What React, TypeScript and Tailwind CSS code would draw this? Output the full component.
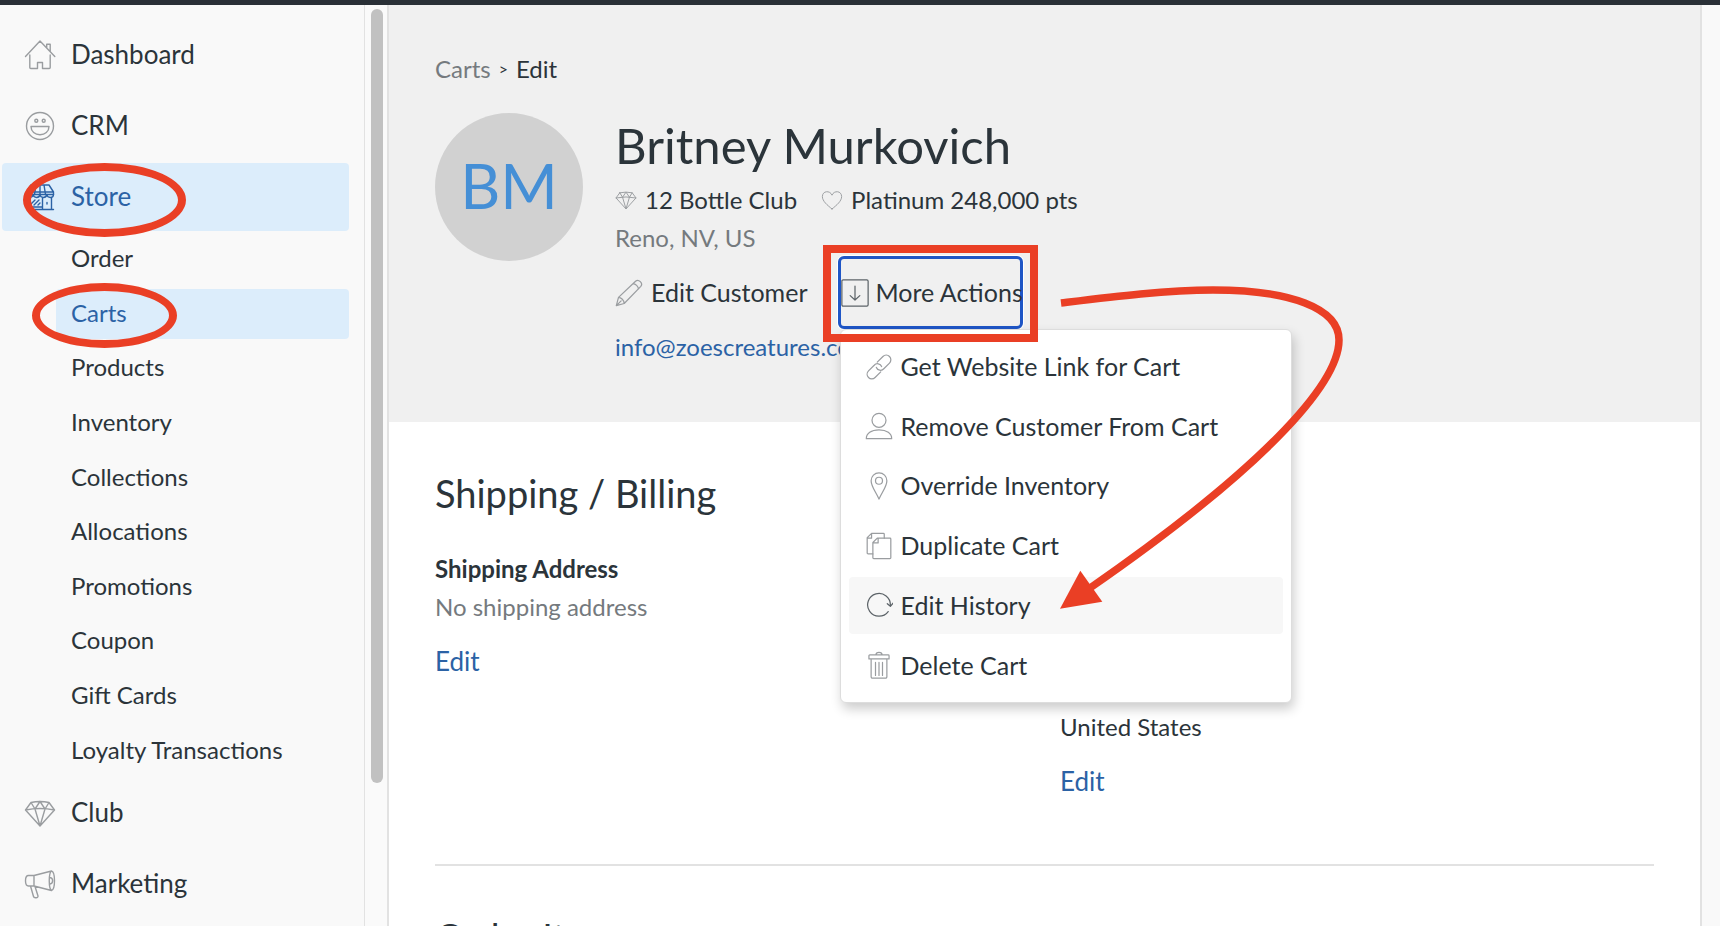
import type { ReactNode } from 'react';

type IconProps = { className?: string };

const Svg = ({ className, children }: IconProps & { children: ReactNode }) => (
    <svg
        viewBox="0 0 32 32"
        fill="none"
        stroke="currentColor"
        strokeWidth="1.4"
        strokeLinecap="round"
        strokeLinejoin="round"
        className={className}
        aria-hidden="true"
    >
        {children}
    </svg>
);

const HomeIcon = ({ className }: IconProps) => (
    <Svg className={className}>
        <path d="M1.5 17.5 16 2l14.800 15.500M5.800 16v12.500a1 1 0 0 0 1 1h6.700v-6h5v6h6.700a1 1 0 0 0 1-1V16M22.700 8.700V5.200h3.500v7.200" />
    </Svg>
);

const SmileIcon = ({ className }: IconProps) => (
    <Svg className={className}>
        <circle cx="16" cy="16" r="13.5" />
        <circle cx="12.300" cy="10.800" r="1.500" />
        <circle cx="19.700" cy="10.800" r="1.500" />
        <path d="M7 16.500h18c0 5-4 8.300-9 8.300s-9-3.300-9-8.300Z" />
    </Svg>
);

const StoreIcon = ({ className }: IconProps) => (
    <Svg className={className}>
        <path d="M7 4h18l4.500 7v2.500H2.500V11L7 4ZM2.500 11h27M12 4l-1.500 9.500M20 4l1.500 9.500M16 4v9.500" />
        <path d="M2.500 13.500c0 4 6 4 6.700 0 .7 4 6 4 6.800 0 .7 4 6 4 6.800 0 .7 4 6.700 4 6.700 0M4.500 17v11.500M27.500 17v11.500M3 28.500h26.500M4.500 26h14M18.500 28.500V17.500M7 23l4-4M10 24l5-5M14 24l2-2M23 21.500v1.500" />
    </Svg>
);

const DiamondIcon = ({ className }: IconProps) => (
    <Svg className={className}>
        <path d="M7 5.500q9-2 18 0L30.500 13 16 29 1.500 13 7 5.500ZM1.500 13q14.500-3 29 0M7 5.500l4 6.500L16 4.500l5 7.500 4-6.500M11 12l5 17 5-17" />
    </Svg>
);

const MegaphoneIcon = ({ className }: IconProps) => (
    <Svg className={className}>
        <path d="M10 7.500H4.500c-4 0-4 10.500 0 10.500H10M10 7.500V18l17.500 4.500c4-1 4-18.500 0-19.500L10 7.500ZM27.500 3c-3 2-3 17.500 0 19.500M26 9.500c3.500.5 3.500 6 0 6.500M6.500 18l3 10.500c.5 2 5 1.500 4.500-.5l-3-9.500" />
    </Svg>
);

const HeartIcon = ({ className }: IconProps) => (
    <Svg className={className}>
        <path d="M16 29C9 23.500 2 17.500 2 11c0-8.500 11-9.500 14-2 3-7.500 14-6.500 14 2 0 6.500-7 12.500-14 18Z" />
    </Svg>
);

const PencilIcon = ({ className }: IconProps) => (
    <Svg className={className}>
        <path d="M1.500 30.500 4 21 23.500 2.500c3.500-3 9 2.500 6 6L10.500 28l-9 2.500ZM4 21c3 0 6.500 3.500 6.500 7M20.500 5.300c3 0 6.200 3.200 6.200 6.200M1.500 30.500 7 25" />
    </Svg>
);

const DownloadBoxIcon = ({ className }: IconProps) => (
    <Svg className={className}>
        <rect x="1" y="1" width="30" height="30" rx="1.500" />
        <path d="M16 8v16M10.500 19l5.500 5 5.500-5" />
    </Svg>
);

const LinkIcon = ({ className }: IconProps) => (
    <Svg className={className}>
        <path d="M13 16.500a5 5 0 0 0 8.500 1.500l6.500-6.500a5.300 5.300 0 0 0-7.500-7.500l-6.500 6.500" />
        <path d="M19 15.500a5 5 0 0 0-8.500-1.500L4 20.500a5.300 5.300 0 0 0 7.500 7.500l6.500-6.500" />
    </Svg>
);

const UserIcon = ({ className }: IconProps) => (
    <Svg className={className}>
        <circle cx="16" cy="9.500" r="8" />
        <path d="M1.500 30.500c0-6 5.500-10 14.500-10s14.500 4 14.500 10h-29Z" />
    </Svg>
);

const PinIcon = ({ className }: IconProps) => (
    <Svg className={className}>
        <path d="M16 31C13 23.500 7 17 7 10a9 9 0 0 1 18 0c0 7-6 13.500-9 21Z" />
        <circle cx="16" cy="10" r="4" />
    </Svg>
);

const CopyIcon = ({ className }: IconProps) => (
    <Svg className={className}>
        <path d="M9 25H3.500a1 1 0 0 1-1-1V6.500L7.500 1.500H21a1 1 0 0 1 1 1V7M2.500 7h5V1.500" />
        <path d="M14 7h14.500a1 1 0 0 1 1 1v21.500a1 1 0 0 1-1 1H10a1 1 0 0 1-1-1V12l5-5ZM9 12.500h6V7" />
    </Svg>
);

const RefreshIcon = ({ className }: IconProps) => (
    <Svg className={className}>
        <path d="M26.500 23.500A13 13 0 1 1 29 16.500M25.500 14.500l3.500 3 3-3.500" />
    </Svg>
);

const TrashIcon = ({ className }: IconProps) => (
    <Svg className={className}>
        <path d="M7 10v19.500a1.500 1.500 0 0 0 1.500 1.500h15a1.500 1.500 0 0 0 1.500-1.500V10M5.500 4.500h21a1 1 0 0 1 1 1V9h-23V5.500a1 1 0 0 1 1-1ZM12.500 4.500c0-4 7-4 7 0M12 13v15M16 13v15M20 13v15" />
    </Svg>
);

const storeLinks = [
    'Order',
    'Carts',
    'Products',
    'Inventory',
    'Collections',
    'Allocations',
    'Promotions',
    'Coupon',
    'Gift Cards',
    'Loyalty Transactions',
];

const actions = [
    { label: 'Get Website Link for Cart', Icon: LinkIcon },
    { label: 'Remove Customer From Cart', Icon: UserIcon },
    { label: 'Override Inventory', Icon: PinIcon },
    { label: 'Duplicate Cart', Icon: CopyIcon },
    { label: 'Edit History', Icon: RefreshIcon, active: true },
    { label: 'Delete Cart', Icon: TrashIcon },
];

type NavItemProps = { label: string; icon: ReactNode; active?: boolean; children?: ReactNode };

const NavItem = ({ label, icon, active, children }: NavItemProps) => (
    <a
        href="#"
        className={
            active
                ? 'relative flex h-[68px] items-center gap-[15px] rounded bg-[#dcedfb] pb-0.5 pl-[22px] text-[26px] text-[#2b62a5]'
                : 'relative flex h-[68px] items-center gap-[15px] rounded pb-0.5 pl-[22px] text-[26px]'
        }
    >
        <span className={active ? 'pt-0.5 text-[#2b62a5]' : 'pt-0.5 text-[#9a9da0]'}>{icon}</span>
        {label}
        {children}
    </a>
);

const Sidebar = () => (
    <aside className="flex w-[389px] shrink-0 border-r-2 border-[#e2e2e2] bg-[#f9f9f9]">
        <nav className="flex grow flex-col gap-[3px] border-r border-[#e2e2e2] pt-4 pr-[15px] pl-0.5">
            <NavItem label="Dashboard" icon={<HomeIcon className="size-8" />} />
            <NavItem label="CRM" icon={<SmileIcon className="size-8" />} />
            <NavItem label="Store" icon={<StoreIcon className="size-8" />} active>
                <span className="absolute top-0 left-[21px] z-10 h-[74px] w-[163px] rounded-[50%] border-8 border-[#ea3f25]" />
            </NavItem>
            <ul className="grid h-[542px] gap-1 pl-[54px] text-2xl">
                {storeLinks.map((label) => (
                    <li key={label} className="relative flex">
                        <a
                            href="#"
                            className={
                                label === 'Carts'
                                    ? 'flex grow items-center rounded bg-[#dcedfb] pb-0.5 pl-[15px] text-[#2b62a5]'
                                    : 'flex grow items-center rounded pb-0.5 pl-[15px]'
                            }
                        >
                            {label}
                        </a>
                        {label === 'Carts' && (
                            <span className="absolute -top-1.5 -left-6 h-[65px] w-[145px] rounded-[50%] border-8 border-[#ea3f25]" />
                        )}
                    </li>
                ))}
            </ul>
            <NavItem label="Club" icon={<DiamondIcon className="size-8" />} />
            <NavItem label="Marketing" icon={<MegaphoneIcon className="size-8" />} />
        </nav>
        <div className="w-[22px] bg-[#fafafa] pt-1 pr-1 pl-1.5">
            <div className="h-[774px] rounded-full bg-[#c1c1c1]" />
        </div>
    </aside>
);

const MoreActions = () => (
    <div className="relative">
        <button className="flex h-[73px] w-[185px] items-center gap-1.5 rounded-md border-3 border-[#1f56c6] whitespace-nowrap ring-1 ring-white">
            <DownloadBoxIcon className="size-7 shrink-0 text-[#5c6368]" />
            More Actions
        </button>
        <div className="absolute top-full left-0.5 w-[452px] rounded-md border border-[#dddddd] bg-white p-2 shadow-[2px_6px_12px_rgba(0,0,0,0.2)]">
            <ul className="grid h-[356px] gap-0.5">
                {actions.map(({ label, Icon, active }) => (
                    <li key={label} className="flex">
                        <button
                            className={
                                active
                                    ? 'flex grow items-center gap-[7px] rounded bg-[#f7f7f7] pl-4 text-left'
                                    : 'flex grow items-center gap-[7px] rounded pl-4 text-left'
                            }
                        >
                            <Icon className={active ? 'size-7 text-[#5c6368]' : 'size-7 text-[#9a9da0]'} />
                            {label}
                        </button>
                    </li>
                ))}
            </ul>
        </div>
        <span className="absolute -top-[11px] -left-[15px] h-[97px] w-[215px] border-8 border-[#ea3f25]" />
        <svg
            viewBox="1058 280 290 334"
            className="absolute top-6 left-[220px] h-[334px] w-[290px]"
            fill="none"
            aria-hidden="true"
        >
            <path
                d="M1061 303C1110 297 1165 290 1213 290C1290 290 1339 308 1339 340C1339 385 1260 470 1090 588"
                stroke="#ea3f25"
                strokeWidth="7.500"
            />
            <path d="M1080.300 570.700 1102.300 601.700 1060 608.700Z" fill="#ea3f25" />
        </svg>
    </div>
);

const CustomerHeader = () => (
    <header className="h-[417px] bg-[#f0f0f0] pt-12 pl-[46px] text-2xl">
        <nav className="flex h-8 items-center gap-2" aria-label="Breadcrumb">
            <a href="#" className="text-[#757a7e]">
                Carts
            </a>
            <span className="text-base">&gt;</span>
            <span>Edit</span>
        </nav>
        <div className="mt-7 flex gap-8">
            <div className="flex size-[148px] shrink-0 items-center justify-center rounded-full bg-[#d1d1d1] pb-1 text-[62px] text-[#458fd6]">
                BM
            </div>
            <div>
                <h1 className="text-[49px] leading-[64px]">Britney Murkovich</h1>
                <div className="mt-[3px] flex h-10 items-center gap-6">
                    <span className="flex items-center gap-2">
                        <DiamondIcon className="size-[22px] text-[#9a9da0]" />
                        12 Bottle Club
                    </span>
                    <span className="flex items-center gap-2">
                        <HeartIcon className="size-[22px] text-[#9a9da0]" />
                        Platinum 248,000 pts
                    </span>
                </div>
                <p className="h-9 leading-9 text-[#757a7e]">Reno, NV, US</p>
                <div className="flex gap-[31px] text-[25px]">
                    <button className="flex h-[73px] items-center gap-2 whitespace-nowrap">
                        <PencilIcon className="size-7 text-[#9a9da0]" />
                        Edit Customer
                    </button>
                    <MoreActions />
                </div>
                <a href="#" className="block leading-9 text-[#2b62a5]">
                    info@zoescreatures.com
                </a>
            </div>
        </div>
    </header>
);

const Addresses = () => (
    <section className="border-b-2 border-[#e2e2e2] pt-12 pb-[63px]">
        <h2 className="text-[38px] leading-[46px]">Shipping / Billing</h2>
        <div className="mt-[34px] grid grid-cols-[625px_1fr] text-2xl leading-[38px]">
            <div>
                <h3 className="font-bold">Shipping Address</h3>
                <p className="text-[#757a7e]">No shipping address</p>
                <a href="#" className="mt-4 inline-block text-[26px] leading-[38px] text-[#2b62a5]">
                    Edit
                </a>
            </div>
            <div className="pt-[158px]">
                <p>United States</p>
                <a href="#" className="mt-4 inline-block text-[26px] leading-[38px] text-[#2b62a5]">
                    Edit
                </a>
            </div>
        </div>
    </section>
);

const App = () => {
    return (
        <div className="flex h-screen flex-col overflow-hidden border-t-5 border-[#2a3037] bg-[#f9f9f9] font-['Lato',sans-serif] text-[#2b343a]">
            <div className="flex min-h-0 grow">
                <Sidebar />
                <main className="mr-[18px] min-w-0 grow border-r-2 border-[#e2e2e2] bg-white">
                    <CustomerHeader />
                    <div className="px-[46px]">
                        <Addresses />
                        <h2 className="mt-12 text-[38px] leading-[46px]">Order Items</h2>
                    </div>
                </main>
            </div>
        </div>
    );
};

export default App;
